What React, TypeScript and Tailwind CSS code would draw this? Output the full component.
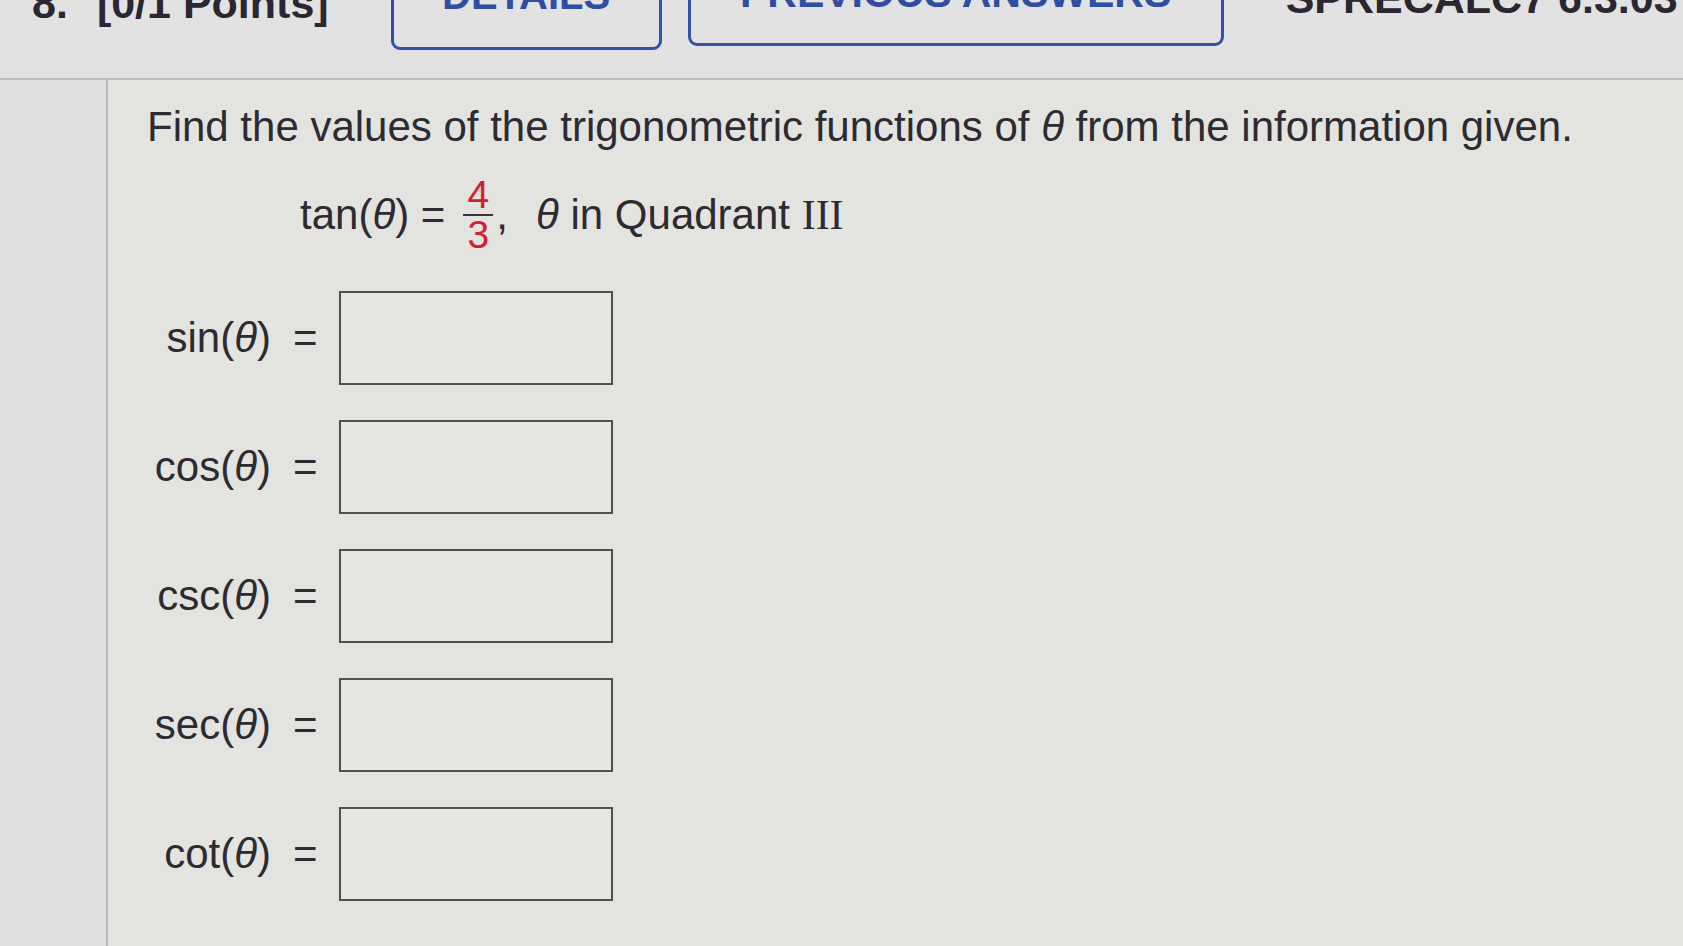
const rows = ['sin', 'cos', 'csc', 'sec', 'cot'];

function Theta() {
  return <i className="italic">θ</i>;
}

export default function App() {
  return (
    <div className="min-h-screen w-full flex flex-col bg-[#e3e3e0] text-[#2e2a31] font-['Liberation_Sans',Arial,sans-serif] overflow-hidden">
      {/* top strip: question header, mostly cut off by the photo */}
      <div className="h-[80px] shrink-0 flex items-start overflow-hidden bg-[#e1e2e1] border-b-2 border-[#bdbdbc]">
        <span className="ml-[32px] -mt-[18px] text-[43px] font-bold leading-none text-[#2b2631] whitespace-nowrap">8.</span>
        <span className="ml-[29px] -mt-[18px] text-[43px] font-bold leading-none text-[#2b2631] whitespace-nowrap">[0/1 Points]</span>
        <div className="ml-[62px] -mt-[40px] w-[271px] h-[90px] shrink-0 border-[3px] border-[#3152a6] rounded-b-[9px] flex justify-center pt-[12px]">
          <span className="text-[40px] font-bold leading-none text-[#2f4ea3]">DETAILS</span>
        </div>
        <div className="ml-[26px] -mt-[40px] w-[536px] h-[86px] shrink-0 border-[3px] border-[#3152a6] rounded-b-[9px] flex justify-center pt-[10px]">
          <span className="text-[41px] font-bold leading-none text-[#2f4ea3] whitespace-nowrap">PREVIOUS ANSWERS</span>
        </div>
        <span className="ml-[62px] -mt-[23px] text-[43px] font-bold leading-none text-[#2b2631] whitespace-nowrap">SPRECALC7 6.3.037.</span>
      </div>

      <div className="flex-1 flex">
        <div className="w-[108px] shrink-0 bg-[#dddfe0] border-r-2 border-[#b8b8ba]" />

        <div className="flex-1 pl-[39px] pt-[22px]">
          <p className="text-[42px] leading-[50px] whitespace-nowrap">
            Find the values of the trigonometric functions of <Theta /> from the information given.
          </p>

          <div className="mt-[26px] ml-[153px] flex items-center text-[42px] leading-[50px] whitespace-nowrap">
            <span>
              tan(<Theta />) =
            </span>
            <span className="ml-[18px] flex flex-col items-center w-[30px] text-[#d0212d] text-[39px]">
              <span className="h-[34px] leading-[34px]">4</span>
              <span className="mt-[2px] h-[2px] w-[30px] bg-[#3a3438]" />
              <span className="mt-[2px] h-[34px] leading-[34px]">3</span>
            </span>
            <span className="ml-[3px]">,</span>
            <span className="ml-[28px]">
              <Theta /> in Quadrant <span className="font-['Liberation_Serif',serif]">III</span>
            </span>
          </div>

          <div className="mt-[39px] flex flex-col gap-[35px]">
            {rows.map((fn) => (
              <div key={fn} className="flex items-center">
                <span className="w-[124px] text-right text-[42px] leading-[50px] whitespace-nowrap">
                  {fn}(<Theta />)
                </span>
                <span className="ml-[22px] text-[42px] leading-[50px]">=</span>
                <div className="ml-[21px] w-[274px] h-[94px] border-2 border-[#554c54] bg-[#e6e6e3]" />
              </div>
            ))}
          </div>
        </div>
      </div>
    </div>
  );
}
